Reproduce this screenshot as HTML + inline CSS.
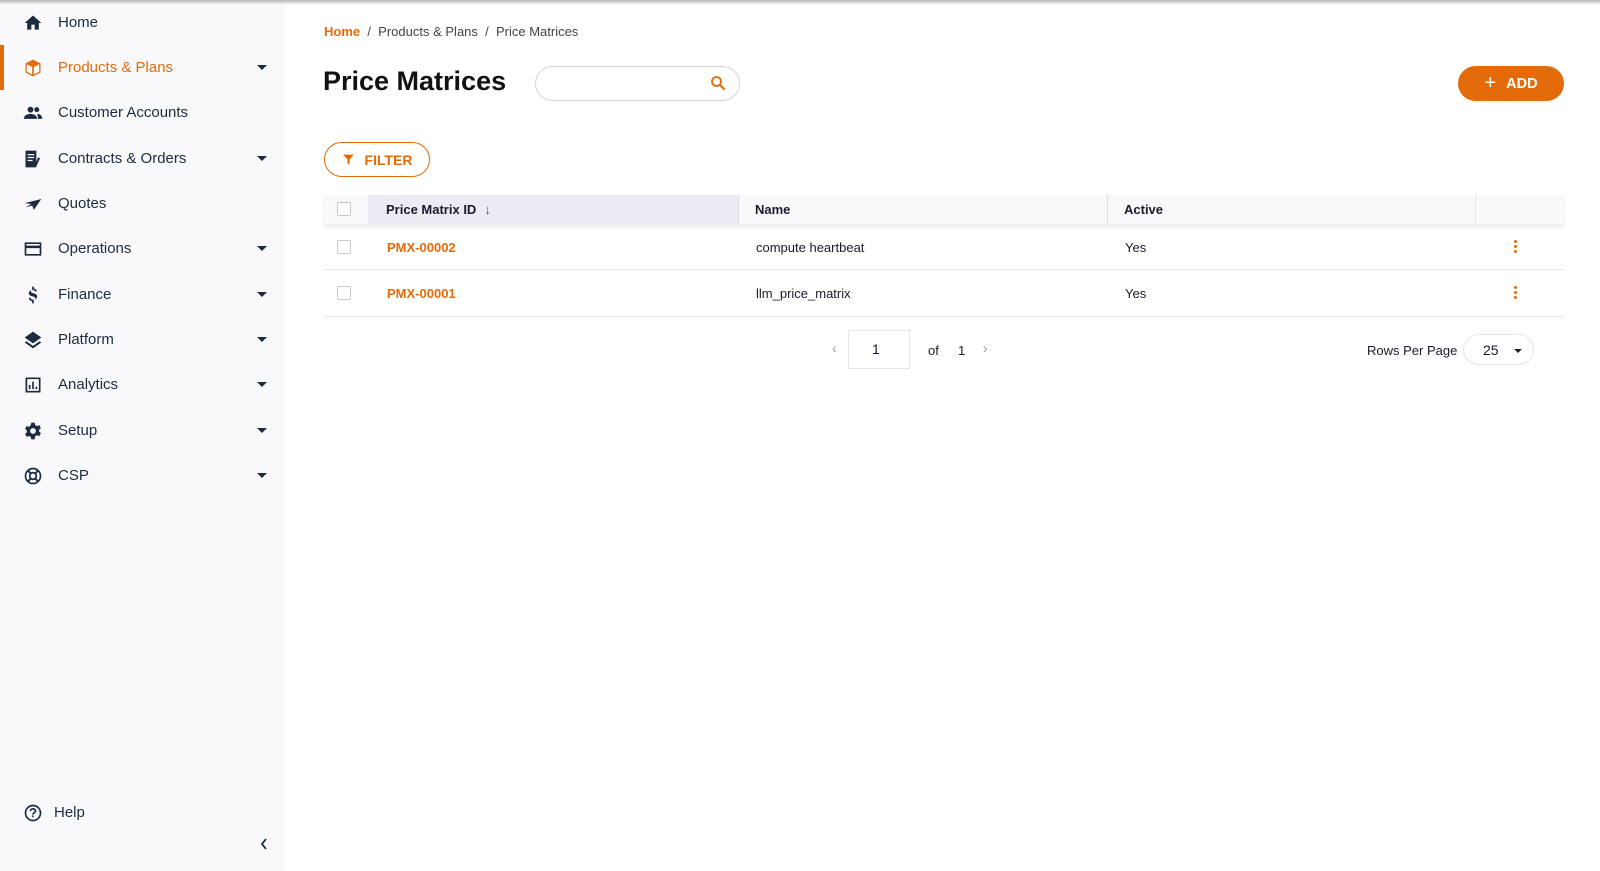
<!DOCTYPE html>
<html><head><meta charset="utf-8"><style>
*{box-sizing:border-box;margin:0;padding:0}
body{width:1600px;height:871px;overflow:hidden;background:#fff;font-family:"Liberation Sans",sans-serif;position:relative;color:#1a1a2e}
.top{position:absolute;left:0;top:0;width:1600px;height:5px;background:linear-gradient(#888,#fff);opacity:.6;z-index:5}
.side{position:absolute;left:0;top:0;width:284px;height:871px;background:#f9f9fb}
.it{position:absolute;left:0;width:284px;height:45px;display:flex;align-items:center;font-size:15px;color:#1c2b3f}
.it svg.ic{position:absolute;left:23px;width:20px;height:20px;fill:#1c2b3f}
.it span{position:absolute;left:58px}
.it .ar{position:absolute;left:257px;width:0;height:0;border-left:5px solid transparent;border-right:5px solid transparent;border-top:5px solid #1c2b3f}
.act{color:#e36b0a}.act svg.ic{fill:#e36b0a}
.bar{position:absolute;left:0;top:45px;width:4px;height:45px;background:#e36b0a}
.a{position:absolute}
.or{color:#e36b0a}
.cb{position:absolute;left:337px;width:14px;height:14px;border:1.5px solid #c8c8d0;border-radius:2px;background:#fff}
.th{position:absolute;top:195px;height:29px;font-size:13px;font-weight:bold;display:flex;align-items:center}
.td{position:absolute;font-size:13px;font-family:"Liberation Sans",sans-serif}
.dots{position:absolute;left:1514px;width:3px}
.dots i{display:block;width:3px;height:3px;border-radius:50%;background:#e36b0a;margin-bottom:2px}
</style></head><body>
<div class="top"></div>
<div class="side">
<div class="bar"></div>
<div class="it" style="top:0"><svg class="ic" viewBox="0 0 24 24"><path d="M10 20v-6h4v6h5v-8h3L12 3 2 12h3v8z"/></svg><span>Home</span></div>
<div class="it act" style="top:45px"><svg class="ic" viewBox="0 0 24 24"><path d="M12 2l9 4.5v11L12 22l-9-4.5v-11zM4.5 7.5v9l6.5 3.3v-9zm15 0L13 10.8v9l6.5-3.3z"/></svg><span>Products &amp; Plans</span><div class="ar"></div></div>
<div class="it" style="top:90px"><svg class="ic" viewBox="0 0 24 24"><circle cx="9" cy="8" r="3.5"/><circle cx="16.5" cy="8" r="3"/><path d="M1 19c0-4 4-6 8-6s8 2 8 6zM17 13c3 0 6 2 6 5v1h-5c0-2-.5-4.5-1-6z"/></svg><span>Customer Accounts</span></div>
<div class="it" style="top:136px"><svg class="ic" viewBox="0 0 24 24"><path d="M3 2h13v20H3zM5.5 6v1.5h8V6zm0 3.5V11h8V9.5zm0 3.5v1.5h6V13zM18 10l2.5 1-4 9-2-1z"/></svg><span>Contracts &amp; Orders</span><div class="ar"></div></div>
<div class="it" style="top:181px"><svg class="ic" viewBox="0 0 24 24"><path d="M2 11l20-5-9 13-2-5-8 2 7-4z"/></svg><span>Quotes</span></div>
<div class="it" style="top:226px"><svg class="ic" viewBox="0 0 24 24"><path d="M2 4h20v16H2zm2 2v2h16V6zm0 5v7h16v-7z"/></svg><span>Operations</span><div class="ar"></div></div>
<div class="it" style="top:272px"><svg class="ic" viewBox="0 0 24 24"><path d="M11 2h2v2.2c2 .3 3.5 1.6 3.7 3.6h-2.2c-.2-1.2-1.2-1.8-2.5-1.8-1.6 0-2.5.8-2.5 1.8 0 1.2 1 1.6 3 2.1 2.6.6 4.4 1.5 4.4 3.9 0 2-1.6 3.4-3.9 3.7V22h-2v-2.5c-2.3-.3-4-1.8-4.1-4h2.2c.2 1.4 1.3 2.2 2.9 2.2 1.8 0 2.7-.8 2.700-1.9 0-1.2-.9-1.7-3-2.2C8.5 13 7 12 7 9.8c0-1.8 1.6-3.3 4-3.6z"/></svg><span>Finance</span><div class="ar"></div></div>
<div class="it" style="top:317px"><svg class="ic" viewBox="0 0 24 24"><path d="M12 2l10 7-10 7L2 9zM4 13.5l8 5.5 8-5.5 2 1.5-10 7-10-7z"/></svg><span>Platform</span><div class="ar"></div></div>
<div class="it" style="top:362px"><svg class="ic" viewBox="0 0 24 24"><path d="M3 3h18v18H3zm2 2v14h14V5zm2 7h2v5H7zm4-4h2v9h-2zm4 6h2v3h-2z"/></svg><span>Analytics</span><div class="ar"></div></div>
<div class="it" style="top:408px"><svg class="ic" viewBox="0 0 24 24"><path d="M10 2h4l.6 2.8 2.2 1.2 2.7-1 2 3.4-2.1 1.9v2.5l2.1 1.9-2 3.4-2.7-1-2.2 1.2L14 22h-4l-.6-2.8-2.2-1.2-2.7 1-2-3.4 2.1-1.9V11.2L2.5 9.4l2-3.4 2.7 1L9.4 4.8zM12 8.5a3.5 3.5 0 100 7 3.5 3.5 0 000-7z"/></svg><span>Setup</span><div class="ar"></div></div>
<div class="it" style="top:453px"><svg class="ic" viewBox="0 0 24 24"><path d="M12 2a10 10 0 110 20 10 10 0 010-20zm0 2a8 8 0 100 16 8 8 0 000-16zm0 3a5 5 0 110 10 5 5 0 010-10zm0 2a3 3 0 100 6 3 3 0 000-6z"/><path d="M5 6.5l2-1.5 4 4-1.5 1.5zM19 6.5l-2-1.5-4 4 1.5 1.5zM5 17.5l2 1.5 4-4-1.5-1.5zM19 17.5l-2 1.5-4-4 1.5-1.5z"/></svg><span>CSP</span><div class="ar"></div></div>
<div class="it" style="top:790px"><svg class="ic" viewBox="0 0 24 24"><path d="M12 2a10 10 0 110 20 10 10 0 010-20zm0 2a8 8 0 100 16 8 8 0 000-16zm-1 11h2v2h-2zm1-9c2.2 0 4 1.6 4 3.6 0 2.5-3 2.6-3 4.4h-2c0-3 3-3 3-4.4 0-.9-.9-1.6-2-1.6s-2 .7-2 1.8H8C8 7.7 9.8 6 12 6z"/></svg><span style="left:54px">Help</span></div>
<svg class="a" style="left:259px;top:837px" width="10" height="14" viewBox="0 0 10 14"><path d="M7 2L3 7l4 5" stroke="#1c2b3f" stroke-width="1.8" fill="none"/></svg>
</div>

<div class="a" style="left:324px;top:24px;font-size:13px;color:#444"><b class="or">Home</b>&nbsp;&nbsp;/&nbsp;&nbsp;Products &amp; Plans&nbsp;&nbsp;/&nbsp;&nbsp;Price Matrices</div>
<div class="a" style="left:323px;top:66px;font-size:27px;font-weight:bold;color:#111">Price Matrices</div>
<div class="a" style="left:535px;top:66px;width:205px;height:35px;border:1px solid #d4d4dc;border-radius:18px"></div>
<svg class="a" style="left:709px;top:74px" width="18" height="18" viewBox="0 0 24 24"><circle cx="10" cy="10" r="6" stroke="#e36b0a" stroke-width="2.4" fill="none"/><path d="M14.5 14.5L21 21" stroke="#e36b0a" stroke-width="2.6"/></svg>
<div class="a" style="left:1458px;top:66px;width:106px;height:35px;border-radius:18px;background:#e36b0a;color:#fff;font-weight:bold;font-size:14.5px;display:flex;align-items:center;justify-content:center"><span style="font-size:20px;font-weight:normal;margin-right:10px">+</span>ADD</div>
<div class="a" style="left:324px;top:142px;width:106px;height:35px;border-radius:18px;border:1.5px solid #e36b0a;color:#e36b0a;font-weight:bold;font-size:14px;display:flex;align-items:center;justify-content:center"><svg width="13" height="13" viewBox="0 0 24 24" style="margin-right:10px"><path d="M2 3h20l-8 9v9l-4-2v-7z" fill="#e36b0a"/></svg>FILTER</div>

<div class="a" style="left:324px;top:195px;width:1240px;height:29px;background:#f9f9fb;box-shadow:0 3px 4px rgba(0,0,0,.08)"></div>
<div class="a" style="left:368px;top:195px;width:371px;height:29px;background:#ececf4;border-right:1px solid #dcdce4"></div>
<div class="a" style="left:1107px;top:195px;width:1px;height:29px;background:#dcdce4"></div>
<div class="a" style="left:1475px;top:195px;width:1px;height:29px;background:#e4e4ea"></div>
<div class="cb" style="top:202px"></div>
<div class="th" style="left:386px">Price Matrix ID <span style="font-weight:normal;margin-left:8px;color:#555">↓</span></div>
<div class="th" style="left:755px">Name</div>
<div class="th" style="left:1124px">Active</div>

<div class="cb" style="top:240px"></div>
<div class="td or" style="left:387px;top:240px;font-weight:bold">PMX-00002</div>
<div class="td" style="left:756px;top:240px">compute heartbeat</div>
<div class="td" style="left:1125px;top:240px">Yes</div>
<div class="dots" style="top:240px"><i></i><i></i><i></i></div>
<div class="a" style="left:324px;top:269px;width:1240px;height:1px;background:#e4e4ea"></div>
<div class="cb" style="top:286px"></div>
<div class="td or" style="left:387px;top:286px;font-weight:bold">PMX-00001</div>
<div class="td" style="left:756px;top:286px">llm_price_matrix</div>
<div class="td" style="left:1125px;top:286px">Yes</div>
<div class="dots" style="top:286px"><i></i><i></i><i></i></div>
<div class="a" style="left:324px;top:316px;width:1240px;height:1px;background:#e4e4ea"></div>

<div class="a" style="left:832px;top:340px;font-size:14px;color:#999">‹</div>
<div class="a" style="left:848px;top:330px;width:62px;height:39px;border:1px solid #e4e4ea;font-size:14px;padding:10px 0 0 23px">1</div>
<div class="a" style="left:928px;top:343px;font-size:13px">of</div>
<div class="a" style="left:958px;top:343px;font-size:13px">1</div>
<div class="a" style="left:983px;top:340px;font-size:14px;color:#999">›</div>
<div class="a" style="left:1367px;top:343px;font-size:13px">Rows Per Page</div>
<div class="a" style="left:1463px;top:334px;width:71px;height:31px;border:1px solid #e4e4ea;border-radius:16px;font-size:14px;padding:7px 0 0 19px">25</div>
<div class="a" style="left:1514px;top:349px;width:0;height:0;border-left:4px solid transparent;border-right:4px solid transparent;border-top:4px solid #222"></div>
</body></html>
